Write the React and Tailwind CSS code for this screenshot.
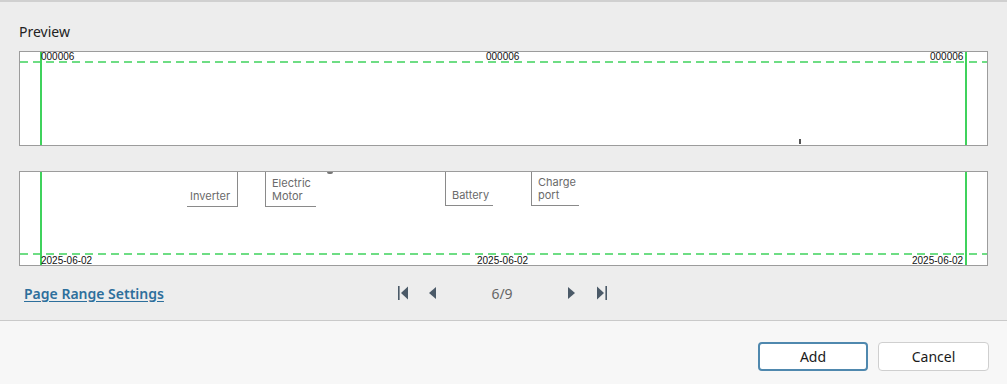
import React from "react";

const GREEN = "#3fd25c";

const DashedLine = ({ top }) => (
  <svg className="absolute left-0 w-full h-[2px]" style={{ top }} preserveAspectRatio="none">
    <line x1="0" y1="1" x2="100%" y2="1" stroke={GREEN} strokeWidth="1.3" strokeDasharray="8 5" />
  </svg>
);

const GuideLines = () => (
  <>
    <div className="absolute top-0 bottom-0 left-[20px] w-[1.5px] bg-[#3fd25c]" />
    <div className="absolute top-0 bottom-0 left-[945px] w-[1.5px] bg-[#3fd25c]" />
  </>
);

const Callout = ({ side, left, width, height, lines }) => (
  <div
    className={`absolute top-0 border-b border-[#8a8a8a] text-[11px] leading-[13px] text-[#6a6a6a] font-['Inter',sans-serif] flex flex-col justify-end pb-[3px] ${
      side === "right" ? "border-r pl-[3px]" : "border-l pl-[6px]"
    }`}
    style={{ left, width, height }}
  >
    {lines.map((l) => (
      <span key={l}>{l}</span>
    ))}
  </div>
);

const NavIcon = ({ kind }) => (
  <svg width="12" height="14" viewBox="0 0 12 14" fill="#4b5a68">
    {kind === "first" && (
      <>
        <rect x="0" y="0" width="1.6" height="14" />
        <path d="M10 0.5 L3 7 L10 13.5 Z" />
      </>
    )}
    {kind === "prev" && <path d="M9 1 L2 7 L9 13 Z" />}
    {kind === "next" && <path d="M3 1 L10 7 L3 13 Z" />}
    {kind === "last" && (
      <>
        <path d="M1 0.5 L8 7 L1 13.5 Z" />
        <rect x="9.4" y="0" width="1.6" height="14" />
      </>
    )}
  </svg>
);

export default function App() {
  return (
    <div className="w-[1007px] h-[384px] flex flex-col font-['Noto_Sans','Open_Sans',sans-serif] text-[#1a1a1a] overflow-hidden">
      <div className="flex-1 flex flex-col bg-[#ededed] border-t-2 border-[#d0d0d0] border-b border-b-[#cacaca] px-[19px]">
        <div className="pt-[20px] h-[49px] text-[14px] leading-[20px] text-[#222]">Preview</div>

        <div className="relative h-[95px] w-[969px] border border-[#9c9c9c] bg-white font-['Liberation_Sans',sans-serif] text-[10px] leading-[11px] text-[#111]">
          <GuideLines />
          <DashedLine top={9} />
          <span className="absolute top-[-1px] left-[21px]">000006</span>
          <span className="absolute top-[-1px] left-[466px]">000006</span>
          <span className="absolute top-[-1px] left-[910px]">000006</span>
          <div className="absolute left-[779px] bottom-[1px] w-[2px] h-[5px] bg-[#555]" />
        </div>

        <div className="relative mt-[25px] h-[95px] w-[969px] border border-[#9c9c9c] bg-white font-['Liberation_Sans',sans-serif] text-[10px] leading-[11px] text-[#111]">
          <GuideLines />
          <DashedLine top={81} />
          <Callout side="right" left={167} width={51} height={35} lines={["Inverter"]} />
          <Callout side="left" left={245} width={51} height={35} lines={["Electric", "Motor"]} />
          <Callout side="left" left={425} width={48} height={34} lines={["Battery"]} />
          <Callout side="left" left={511} width={48} height={34} lines={["Charge", "port"]} />
          <div className="absolute top-0 left-[307px] w-[6px] h-[2px] rounded-b-full bg-[#777]" />
          <span className="absolute top-[83px] left-[21px]">2025-06-02</span>
          <span className="absolute top-[83px] left-[457px]">2025-06-02</span>
          <span className="absolute top-[83px] left-[892px]">2025-06-02</span>
        </div>

        <div className="flex-1 flex items-center">
          <a className="ml-[5px] w-[374px] text-[14px] font-semibold text-[#2d6f9c] underline underline-offset-2 cursor-pointer">
            Page Range Settings
          </a>
          <div className="flex items-center">
            <NavIcon kind="first" />
            <div className="ml-[17px]"><NavIcon kind="prev" /></div>
            <span className="w-[126px] text-center text-[14px] text-[#666]">6/9</span>
            <NavIcon kind="next" />
            <div className="ml-[19px]"><NavIcon kind="last" /></div>
          </div>
        </div>
      </div>

      <div className="h-[63px] bg-[#f7f7f7] flex items-start justify-end pt-[21px] pr-[18px] gap-[10px]">
        <button className="w-[110px] h-[29px] rounded-[4px] border-2 border-[#4f88ae] bg-white text-[14px] text-[#1a1a1a]">
          Add
        </button>
        <button className="w-[111px] h-[29px] rounded-[4px] border border-[#cfcfcf] bg-white text-[14px] text-[#1a1a1a]">
          Cancel
        </button>
      </div>
    </div>
  );
}
